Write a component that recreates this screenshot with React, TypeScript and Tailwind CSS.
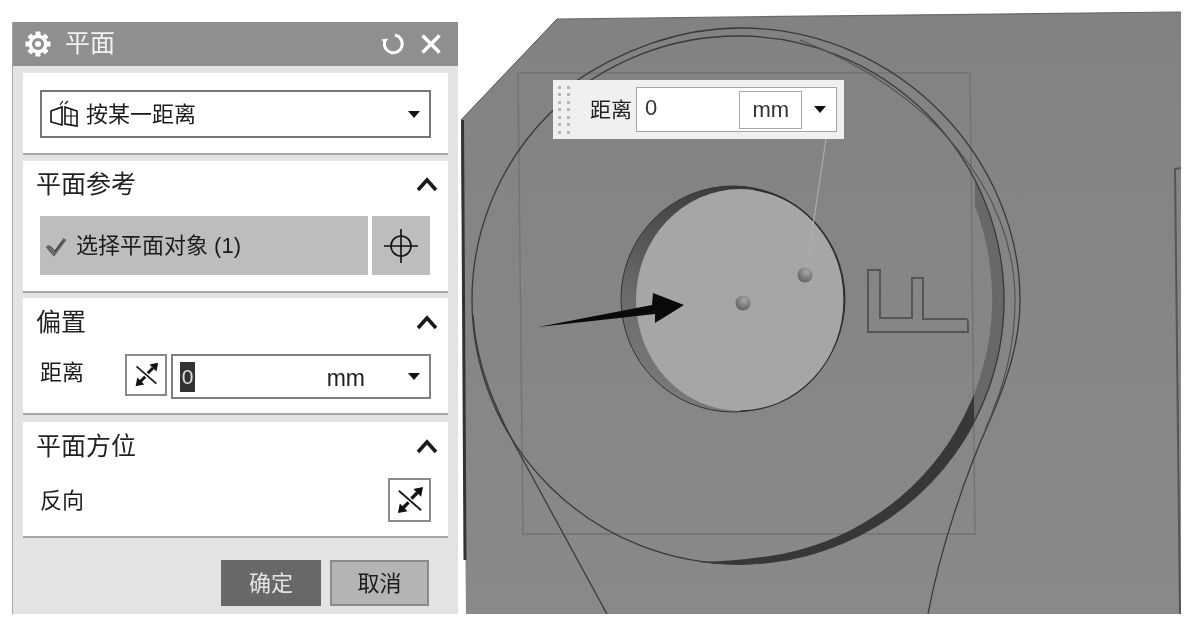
function SwapIcon({ size = 30 }: { size?: number }) {
  return (
    <svg width={size} height={size} viewBox="0 0 30 30" fill="none">
      <path d="M4 5 L27 25" stroke="#1a1a1a" strokeWidth="2" />
      <path d="M14 17 L8 23" stroke="#111" strokeWidth="3.4" />
      <path d="M3 28 L5 18 L13 26 Z" fill="#111" />
      <path d="M17 13 L23 7" stroke="#111" strokeWidth="3.4" />
      <path d="M29 1 L27 11 L19 3 Z" fill="#111" />
    </svg>
  );
}

function Caret({ className = "" }: { className?: string }) {
  return <span className={`block w-0 h-0 border-l-[6px] border-r-[6px] border-t-[7px] border-l-transparent border-r-transparent border-t-[#111] ${className}`} />;
}

function Head({ children, tall }: { children: string; tall?: boolean }) {
  return (
    <div className={`flex items-center justify-between pl-[13px] pr-[10px] text-[25px] text-[#222] ${tall ? "h-[48px]" : "h-[46px]"}`}>
      <span className="pt-[2px]">{children}</span>
      <svg width="22" height="18" viewBox="0 0 22 18" fill="none">
        <path d="M2 15 L11 5 L20 15" stroke="#1a1a1a" strokeWidth="3.6" />
      </svg>
    </div>
  );
}

export default function App() {
  return (
    <div className="flex items-start w-[1193px] h-[621px] bg-white overflow-hidden font-['Liberation_Sans','Noto_Sans_CJK_SC',sans-serif] blur-[0.5px]">
      <div className="ml-[12px] mt-[22px] w-[446px] h-[592px] shrink-0 bg-[#e3e3e3] border-l border-[#a8a8a8]">
        <div className="flex items-center h-[44px] bg-[#8f8f8f]">
          <svg className="ml-[11px]" width="28" height="28" viewBox="0 0 28 28" fill="none">
            <path d="M14 1.5 V26.5 M1.5 14 H26.5 M5.2 5.2 L22.8 22.8 M22.8 5.2 L5.2 22.8" stroke="white" strokeWidth="5" />
            <circle cx="14" cy="14" r="9.5" fill="white" />
            <circle cx="14" cy="14" r="6" fill="#8f8f8f" />
            <circle cx="14" cy="14" r="3" fill="white" />
          </svg>
          <span className="ml-[13px] text-[25px] text-[#f2f2f2]">平面</span>
          <svg className="ml-auto" width="26" height="26" viewBox="0 0 26 26" fill="none">
            <path d="M14 4 A 9 9 0 1 1 3.5 11" stroke="white" strokeWidth="3" />
            <path d="M0.5 8.5 L7 7.5 L4 13 Z" fill="white" />
          </svg>
          <svg className="ml-[14px] mr-[17px]" width="20" height="20" viewBox="0 0 20 20" fill="none">
            <path d="M1.5 1.5 L18.5 18.5 M18.5 1.5 L1.5 18.5" stroke="white" strokeWidth="3.6" />
          </svg>
        </div>
        <div className="px-[10px] pt-[7px]">
          <section className="h-[82px] bg-white border-b-2 border-[#a6a6a6] px-[17px] pt-[17px]">
            <div className="flex items-center h-[48px] border-2 border-[#777] pl-[8px] pr-[9px] text-[22px] text-[#1c1c1c]">
              <svg width="29" height="29" viewBox="0 0 29 29" fill="none" stroke="#111" strokeWidth="1.6">
                <path d="M1 11 L12 7 L12 25 L1 22 Z" />
                <path d="M15 7 L27 11 L27 26 L15 24 Z" />
                <path d="M15 16 H27 M21 9 V25" strokeWidth="1.2" />
                <path d="M10 5 L13 1 M15 4 L18 1" strokeWidth="1.2" />
              </svg>
              <span className="ml-[7px]">按某一距离</span>
              <Caret className="ml-auto" />
            </div>
          </section>
          <section className="mt-[6px] bg-white border-b-2 border-[#a6a6a6] pb-[16px]">
            <Head>平面参考</Head>
            <div className="flex gap-[4px] mt-[9px] mx-[17px] h-[59px]">
              <div className="flex items-center w-[328px] bg-[#bdbdbd] pl-[5px] text-[22px] text-[#1c1c1c]">
                <svg width="22" height="22" viewBox="0 0 22 22" fill="none">
                  <path d="M2 11 L9 19 L20 4" stroke="#666" strokeWidth="3.6" />
                  <path d="M5 11 L10 16 L18 6" stroke="#333" strokeWidth="1" />
                </svg>
                <span className="ml-[9px]">选择平面对象 (1)</span>
              </div>
              <div className="flex items-center justify-center w-[58px] bg-[#bdbdbd]">
                <svg width="36" height="36" viewBox="0 0 36 36" fill="none" stroke="#111" strokeWidth="1.6">
                  <circle cx="18" cy="18" r="10" />
                  <path d="M1 18 H35 M18 1 V35" />
                </svg>
              </div>
            </div>
          </section>
          <section className="mt-[5px] bg-white border-b-2 border-[#a6a6a6] pb-[14px]">
            <Head tall>偏置</Head>
            <div className="flex items-start mt-[8px] ml-[17px] mr-[17px] h-[45px]">
              <span className="w-[85px] pt-[3px] text-[22px] leading-[32px] text-[#1c1c1c]">距离</span>
              <div className="flex items-center justify-center w-[42px] h-[42px] border-2 border-[#8a8a8a]">
                <SwapIcon size={26} />
              </div>
              <div className="flex items-center ml-[4px] flex-1 h-[45px] border-2 border-[#808080] pl-[7px] pr-[9px]">
                <span className="flex items-center justify-center w-[15px] h-[30px] bg-[#333] text-[21px] text-[#ddd]">0</span>
                <span className="ml-auto mr-[43px] mt-[3px] text-[23px] text-[#222]">mm</span>
                <Caret />
              </div>
            </div>
          </section>
          <section className="mt-[7px] bg-white border-b-2 border-[#a6a6a6] pb-[14px]">
            <Head tall>平面方位</Head>
            <div className="flex items-center justify-between mt-[8px] ml-[17px] mr-[17px] h-[44px]">
              <span className="text-[22px] text-[#1c1c1c]">反向</span>
              <div className="flex items-center justify-center w-[43px] h-[44px] border-2 border-[#8a8a8a]">
                <SwapIcon size={29} />
              </div>
            </div>
          </section>
          <div className="flex justify-end gap-[9px] mt-[22px] pr-[19px]">
            <div className="flex items-center justify-center w-[100px] h-[46px] bg-[#686868] text-[22px] text-[#e4e4e4]">确定</div>
            <div className="flex items-center justify-center w-[99px] h-[46px] bg-[#b4b4b4] border-2 border-[#8a8a8a] text-[22px] text-[#1c1c1c]">取消</div>
          </div>
        </div>
      </div>

      <div className="relative ml-[2px] mt-[10px] w-[721px] h-[604px] shrink-0">
        <svg className="block" width="721" height="604" viewBox="460 10 721 604" fill="none">
          <defs>
            <linearGradient id="part" x1="0" y1="0" x2="0" y2="1">
              <stop offset="0" stopColor="#828282" />
              <stop offset="1" stopColor="#898989" />
            </linearGradient>
            <linearGradient id="rim" x1="0.6" y1="0" x2="0.2" y2="1">
              <stop offset="0" stopColor="#363636" />
              <stop offset="0.6" stopColor="#6a6a6a" />
              <stop offset="1" stopColor="#7c7c7c" />
            </linearGradient>
            <radialGradient id="ball" cx="0.6" cy="0.3" r="0.8">
              <stop offset="0" stopColor="#a8a8a8" />
              <stop offset="1" stopColor="#585858" />
            </radialGradient>
            <clipPath id="inPlane">
              <rect x="460" y="10" width="514" height="604" />
            </clipPath>
          </defs>
          <path d="M557 19 L1181 12 V614 H466 L461 120 Z" fill="url(#part)" />
          <path d="M461 120 L557 19" stroke="#555" strokeWidth="1" />
          <path d="M557 19 L1181 12" stroke="#6a6a6a" strokeWidth="1.2" />
          <path d="M462.5 120 L465 560" stroke="#333" strokeWidth="3" />
          <path d="M1181 168 L1175 169 L1180 614" stroke="#555" strokeWidth="2" />

          <path d="M518 73 H970 L975 534 H523 Z" stroke="#737373" strokeWidth="1.4" />

          <path d="M975 180 A266 264 0 0 1 700 562 Q730 562 770 556 A260 260 0 0 0 975 206 Z" fill="#686868" />
          <path d="M975 180 A266 264 0 0 1 700 562 Q730 562 770 556 A260 260 0 0 0 975 206 Z" fill="#373737" clipPath="url(#inPlane)" />

          <ellipse cx="738" cy="300" rx="266" ry="264" stroke="#3a3a3a" strokeWidth="1.3" />
          <path d="M607 614 L522 458 C495 410 476 365 473 315" stroke="#3a3a3a" strokeWidth="1.3" />
          <path d="M570 85 C620 50 680 28 740 28 C900 28 1020 160 1020 300 C1020 345 1005 385 990 420 C965 475 940 550 928 614" stroke="#3a3a3a" strokeWidth="1.3" />
          <path d="M985 430 C1005 385 1015 345 1015 300 C1015 190 930 90 800 40" stroke="#505050" strokeWidth="1.1" />

          <ellipse cx="733" cy="299" rx="112" ry="113" fill="url(#rim)" stroke="#333" strokeWidth="1" />
          <ellipse cx="740" cy="300" rx="104" ry="111" fill="#a6a6a6" />
          <path d="M755 190 A 104 111 0 0 1 844 300 A 104 111 0 0 1 740 411" stroke="#2e2e2e" strokeWidth="1.2" />

          <path d="M868 270 H880 V318 H912 V278 H923 V319 H966 Q968 319 968 324 V332 H868 Z" stroke="#555" strokeWidth="2" />

          <path d="M826 139 L806 272" stroke="#acacac" strokeWidth="1.2" />
          <circle cx="805" cy="275" r="7.5" fill="url(#ball)" />
          <circle cx="743" cy="303" r="7.5" fill="url(#ball)" />
          <path d="M538 327 L652 305 L653 293 L684 305 L655 323 L655 314 Z" fill="#0a0a0a" />
        </svg>

        <div className="absolute left-[93px] top-[70px] flex items-center w-[291px] h-[59px] bg-[#f0f0f0] pl-[5px]">
          <div className="grid grid-cols-2 gap-x-[5px] gap-y-[4.5px] w-[13px]">
            {Array.from({ length: 14 }).map((_, i) => (
              <span key={i} className="block w-[3px] h-[3px] bg-[#b8b8b8]" />
            ))}
          </div>
          <span className="ml-[19px] text-[21px] text-[#222]">距离</span>
          <div className="flex items-center ml-[4px] w-[201px] h-[45px] bg-white border border-[#a4a4a4] pl-[8px] pr-[10px] text-[22px] text-[#333]">
            <span className="mb-[4px]">0</span>
            <span className="flex items-center justify-center ml-[82px] w-[63px] h-[38px] border-[1.5px] border-[#a8a8a8]">mm</span>
            <Caret className="ml-auto" />
          </div>
        </div>
      </div>
    </div>
  );
}
